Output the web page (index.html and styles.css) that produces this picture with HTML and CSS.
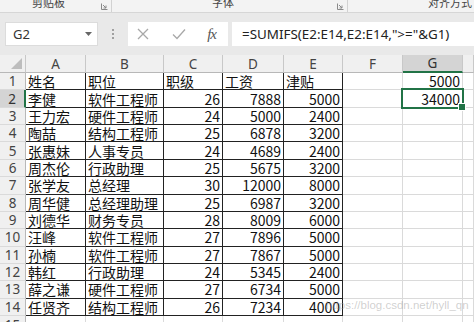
FILE: index.html
```html
<!DOCTYPE html>
<html lang="zh-CN">
<head>
    <meta charset="UTF-8">
    <title>SUMIFS</title>
    <link rel="stylesheet" href="styles.css">
</head>
<body>
    <div class="ribbon">
        <div class="group clip">
            <span class="glabel">剪贴板</span>
            <svg class="launcher" width="7" height="7" viewBox="0 0 7 7"><path d="M0.5 0.5v6h6" fill="none" stroke="#8a8a8a"/><path d="M2 2l3 3M5 2.5V5H2.5" fill="none" stroke="#8a8a8a"/></svg>
        </div>
        <div class="group font">
            <span class="glabel">字体</span>
            <svg class="launcher" width="7" height="7" viewBox="0 0 7 7"><path d="M0.5 0.5v6h6" fill="none" stroke="#8a8a8a"/><path d="M2 2l3 3M5 2.5V5H2.5" fill="none" stroke="#8a8a8a"/></svg>
        </div>
        <div class="group align">
            <span class="glabel">对齐方式</span>
        </div>
    </div>

    <div class="fbar">
        <div class="namebox">
            <span>G2</span>
            <svg width="7" height="4" viewBox="0 0 7 4"><path d="M0 0h7L3.5 4z" fill="#666"/></svg>
        </div>
        <div class="grip"><i></i><i></i><i></i></div>
        <div class="fbuttons">
            <svg width="14" height="14" viewBox="0 0 14 14"><path d="M2 2l10 10M12 2L2 12" stroke="#a8a8a8" stroke-width="1.3"/></svg>
            <svg width="16" height="14" viewBox="0 0 16 14"><path d="M2 7.5l4 4L14 2.5" fill="none" stroke="#a8a8a8" stroke-width="1.3"/></svg>
            <span class="fx">fx</span>
        </div>
        <div class="formula">=SUMIFS(E2:E14,E2:E14,"&gt;="&amp;G1)</div>
    </div>

    <div class="sheet">
        <div class="h corner"><span class="tri"></span></div>
        <div class="h">A</div><div class="h">B</div><div class="h">C</div><div class="h">D</div>
        <div class="h">E</div><div class="h">F</div><div class="h sel-col">G</div><div class="h"></div>

        <div class="rh">1</div>
        <div class="c t">姓名</div><div class="c t">职位</div><div class="c t">职级</div><div class="c t">工资</div><div class="c t">津贴</div>
        <div class="c"></div><div class="c n">5000</div><div class="c"></div>

        <div class="rh sel-row">2</div>
        <div class="c t">李健</div><div class="c t">软件工程师</div><div class="c t n">26</div><div class="c t n">7888</div><div class="c t n">5000</div>
        <div class="c"></div><div class="c n active">34000</div><div class="c"></div>

        <div class="rh">3</div>
        <div class="c t">王力宏</div><div class="c t">硬件工程师</div><div class="c t n">24</div><div class="c t n">5000</div><div class="c t n">2400</div>
        <div class="c"></div><div class="c"></div><div class="c"></div>

        <div class="rh">4</div>
        <div class="c t">陶喆</div><div class="c t">结构工程师</div><div class="c t n">25</div><div class="c t n">6878</div><div class="c t n">3200</div>
        <div class="c"></div><div class="c"></div><div class="c"></div>

        <div class="rh">5</div>
        <div class="c t">张惠妹</div><div class="c t">人事专员</div><div class="c t n">24</div><div class="c t n">4689</div><div class="c t n">2400</div>
        <div class="c"></div><div class="c"></div><div class="c"></div>

        <div class="rh">6</div>
        <div class="c t">周杰伦</div><div class="c t">行政助理</div><div class="c t n">25</div><div class="c t n">5675</div><div class="c t n">3200</div>
        <div class="c"></div><div class="c"></div><div class="c"></div>

        <div class="rh">7</div>
        <div class="c t">张学友</div><div class="c t">总经理</div><div class="c t n">30</div><div class="c t n">12000</div><div class="c t n">8000</div>
        <div class="c"></div><div class="c"></div><div class="c"></div>

        <div class="rh">8</div>
        <div class="c t">周华健</div><div class="c t">总经理助理</div><div class="c t n">25</div><div class="c t n">6987</div><div class="c t n">3200</div>
        <div class="c"></div><div class="c"></div><div class="c"></div>

        <div class="rh">9</div>
        <div class="c t">刘德华</div><div class="c t">财务专员</div><div class="c t n">28</div><div class="c t n">8009</div><div class="c t n">6000</div>
        <div class="c"></div><div class="c"></div><div class="c"></div>

        <div class="rh">10</div>
        <div class="c t">汪峰</div><div class="c t">软件工程师</div><div class="c t n">27</div><div class="c t n">7896</div><div class="c t n">5000</div>
        <div class="c"></div><div class="c"></div><div class="c"></div>

        <div class="rh">11</div>
        <div class="c t">孙楠</div><div class="c t">软件工程师</div><div class="c t n">27</div><div class="c t n">7867</div><div class="c t n">5000</div>
        <div class="c"></div><div class="c"></div><div class="c"></div>

        <div class="rh">12</div>
        <div class="c t">韩红</div><div class="c t">行政助理</div><div class="c t n">24</div><div class="c t n">5345</div><div class="c t n">2400</div>
        <div class="c"></div><div class="c"></div><div class="c"></div>

        <div class="rh">13</div>
        <div class="c t">薛之谦</div><div class="c t">硬件工程师</div><div class="c t n">27</div><div class="c t n">6734</div><div class="c t n">5000</div>
        <div class="c"></div><div class="c"></div><div class="c"></div>

        <div class="rh">14</div>
        <div class="c t">任贤齐</div><div class="c t">结构工程师</div><div class="c t n">26</div><div class="c t n">7234</div><div class="c t n">4000</div>
        <div class="c"></div><div class="c"></div><div class="c"></div>

        <div class="rh last">15</div>
        <div class="c"></div><div class="c"></div><div class="c"></div><div class="c"></div><div class="c"></div>
        <div class="c"></div><div class="c"></div><div class="c"></div>

        <div class="watermark">https://blog.csdn.net/hyll_qn</div>
    </div>
</body>
</html>
```

FILE: styles.css
```css
* {
    box-sizing: border-box;
}

body {
    margin: 0;
    width: 474px;
    height: 322px;
    overflow: hidden;
    background: #fff;
    font-family: "Noto Sans CJK SC", sans-serif;
    color: #222;
}

/* ribbon group labels, cut off at the top */
.ribbon {
    display: flex;
    height: 13px;
    background: #f3f3f3;
    border-bottom: 1px solid #d6d6d6;
    overflow: hidden;
}

.group {
    display: flex;
    align-items: flex-start;
    border-right: 1px solid #d2d2d2;
    height: 12px;
}

.clip {
    width: 112px;
    padding-left: 32px;
}

.font {
    width: 236px;
    padding-left: 100px;
}

.align {
    flex: 1;
    padding-left: 80px;
    border-right: none;
}

.glabel {
    font-size: 11px;
    line-height: 11px;
    margin-top: -3px;
    color: #444;
    white-space: nowrap;
}

.launcher {
    margin: 3px 3px 0 auto;
}

/* formula bar */
.fbar {
    display: flex;
    align-items: center;
    height: 42px;
    padding: 9px 0 9px 5px;
    background: #e9e9e9;
}

.namebox {
    display: flex;
    align-items: center;
    justify-content: space-between;
    width: 93px;
    height: 24px;
    padding: 0 5px 0 7px;
    background: #fff;
    border: 1px solid #dcdcdc;
    font-family: "Noto Sans", sans-serif;
    font-size: 13px;
    color: #333;
}

.grip {
    display: flex;
    flex-direction: column;
    gap: 2px;
    width: 30px;
    align-items: center;
}

.grip i {
    width: 2px;
    height: 2px;
    background: #a0a0a0;
}

.fbuttons {
    display: flex;
    align-items: center;
    justify-content: space-between;
    width: 100px;
    height: 24px;
    padding: 0 12px 0 8px;
    background: #fff;
}

.fx {
    font-family: "Liberation Serif", serif;
    font-style: italic;
    font-size: 15px;
    color: #555;
    letter-spacing: -1px;
}

.formula {
    flex: 1;
    height: 24px;
    margin-left: 4px;
    padding-left: 10px;
    background: #fff;
    font-family: "Noto Sans", sans-serif;
    font-size: 13.4px;
    line-height: 24px;
    color: #222;
    white-space: nowrap;
}

/* worksheet grid */
.sheet {
    position: relative;
    display: grid;
    grid-template-columns: 26px 60px 78px 59px 61px 59px 60px 60px 1fr;
    grid-template-rows: 18px repeat(14, 17.36px) 1fr;
    height: 267px;
}

.h, .rh {
    display: flex;
    align-items: center;
    justify-content: center;
    background: #f0f0f0;
    border-right: 1px solid #c8c8c8;
    border-bottom: 1px solid #c8c8c8;
    font-family: "Noto Sans", sans-serif;
    font-size: 13.5px;
    line-height: 16px;
    color: #444;
}

.h {
    border-bottom-color: #b8b8b8;
}

.rh {
    border-right-color: #b8b8b8;
    border-bottom-color: #dadada;
}

.corner {
    position: relative;
}

.tri {
    position: absolute;
    right: 3px;
    bottom: 3px;
    width: 0;
    height: 0;
    border-left: 11px solid transparent;
    border-bottom: 11px solid #bdbdbd;
}

.sel-col {
    background: #d4d4d4;
    border-bottom: 2px solid #217346;
    color: #333;
}

.sel-row {
    background: #d4d4d4;
    border-right: 2px solid #217346;
    color: #333;
}

.c {
    display: flex;
    align-items: center;
    padding: 0 2px;
    border-right: 1px solid #dadada;
    border-bottom: 1px solid #dadada;
    font-size: 14px;
    line-height: 16px;
    color: #111;
    white-space: nowrap;
    overflow: hidden;
}

.c.t {
    border-color: #222;
}

.c.n {
    justify-content: flex-end;
}

.active {
    position: relative;
    overflow: visible;
}

.active::after {
    content: "";
    position: absolute;
    top: -2px;
    left: -2px;
    right: -2px;
    bottom: -2px;
    border: 2px solid #217346;
}

.active::before {
    content: "";
    position: absolute;
    right: -4px;
    bottom: -4px;
    width: 6px;
    height: 6px;
    background: #217346;
    border: 1px solid #fff;
    z-index: 1;
}

.last {
    align-items: flex-start;
    padding-top: 1px;
}

.watermark {
    position: absolute;
    left: 326px;
    top: 244px;
    font-family: "Liberation Sans", sans-serif;
    font-size: 11.5px;
    color: rgba(150, 150, 150, 0.45);
    white-space: nowrap;
}
```
